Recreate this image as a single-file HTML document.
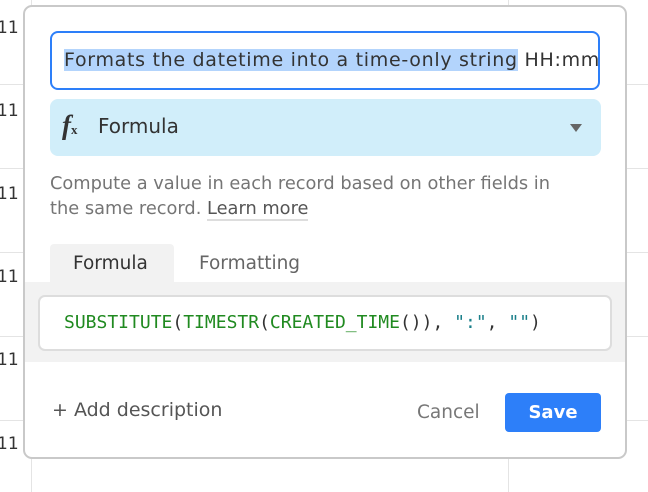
<!DOCTYPE html>
<html><head><style>
body{margin:0;width:648px;height:492px;background:#fff;position:relative;overflow:hidden;font-family:"DejaVu Sans","Liberation Sans",sans-serif;}
.h{position:absolute;left:0;right:0;height:1px;background:#e4e4e4}
.n{position:absolute;left:-3px;font-size:17px;color:#333}
.pop{position:absolute;left:23px;top:5px;width:600px;height:450px;border:2px solid #c9c9c9;border-radius:9px;background:#fff;}
.a{position:absolute}
</style></head><body>
<div class="h" style="top:84px"></div><div class="h" style="top:168px"></div><div class="h" style="top:252px"></div><div class="h" style="top:336px"></div><div class="h" style="top:420px"></div>
<div class="a" style="left:31px;top:0;width:1px;height:492px;background:#e4e4e4"></div>
<div class="a" style="left:508px;top:0;width:1px;height:492px;background:#e4e4e4"></div>
<div class="n" style="top:18px">11</div><div class="n" style="top:101px">11</div><div class="n" style="top:184px">11</div><div class="n" style="top:267px">11</div><div class="n" style="top:350px">11</div><div class="n" style="top:434px">11</div>
<div class="pop">
 <div class="a" style="left:25px;top:24px;width:546px;height:55px;border:2px solid #2d7ff9;border-radius:8px;overflow:hidden;white-space:nowrap;font-size:19px;letter-spacing:0.7px;color:#333;line-height:55px;">
  <span style="margin-left:12px;background:#b3d4fc">Formats the datetime into a time-only string</span> HH:mm
 </div>
 <div class="a" style="left:25px;top:92px;width:551px;height:57px;border-radius:8px;background:#d1eefa;">
  <span class="a" style="left:12px;top:11px;font-family:'Liberation Serif',serif;font-style:italic;font-weight:bold;font-size:27px;color:#333">f<span style="font-size:13px;font-style:normal">x</span></span>
  <span class="a" style="left:48px;top:15px;font-size:20px;color:#333">Formula</span>
  <span class="a" style="left:520px;top:25px;width:0;height:0;border-left:6px solid transparent;border-right:6px solid transparent;border-top:8px solid #666"></span>
 </div>
 <div class="a" style="left:25px;top:164px;width:527px;font-size:17.8px;line-height:25px;color:#757575">Compute a value in each record based on other fields in the same record. <span style="color:#555;border-bottom:2px solid #ddd">Learn more</span></div>
 <div class="a" style="left:25px;top:237px;width:124px;height:40px;background:#f2f2f2;border-radius:4px 4px 0 0"></div>
 <div class="a" style="left:48px;top:246px;font-size:18.5px;color:#333">Formula</div>
 <div class="a" style="left:174px;top:246px;font-size:18.5px;color:#666">Formatting</div>
 <div class="a" style="left:0;top:275px;width:600px;height:80px;background:#f2f2f2"></div>
 <div class="a" style="left:13px;top:288px;width:570px;height:52px;background:#fff;border:2px solid #ddd;border-radius:7px;font-family:'DejaVu Sans Mono',monospace;font-size:18px;line-height:52px;white-space:nowrap;color:#333">
  <span style="margin-left:24px;color:#208a20">SUBSTITUTE</span>(<span style="color:#208a20">TIMESTR</span>(<span style="color:#208a20">CREATED_TIME</span>()), <span style="color:#1a7f8a">":"</span>, <span style="color:#1a7f8a">""</span>)
 </div>
 <div class="a" style="left:27px;top:392px;font-size:19px;color:#555">+ Add description</div>
 <div class="a" style="left:392px;top:395px;font-size:18.5px;color:#777">Cancel</div>
 <div class="a" style="left:480px;top:386px;width:96px;height:39px;background:#2d7ff9;border-radius:4px;color:#fff;font-weight:bold;font-size:18px;line-height:39px;text-align:center">Save</div>
</div>
</body></html>
